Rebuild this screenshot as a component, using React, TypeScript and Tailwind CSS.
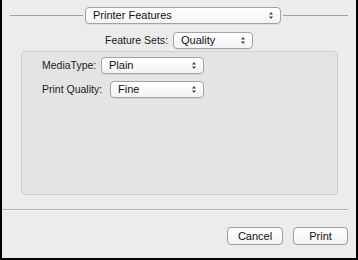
import React from 'react'

const font = { fontFamily: '"Liberation Sans", Arial, sans-serif' }

function Arrows() {
  return (
    <svg width="6" height="9" viewBox="0 0 6 9" className="shrink-0">
      <path d="M3 1 L5 3.5 L1 3.5 Z" fill="#444" />
      <path d="M3 8 L5 5.5 L1 5.5 Z" fill="#444" />
    </svg>
  )
}

function Popup({ label, className }: { label: string; className: string }) {
  return (
    <div
      className={`flex items-center justify-between h-[17px] pl-[7px] pr-[6px] rounded-[4px] border border-[#a3a3a3] bg-gradient-to-b from-white to-[#f4f4f4] shadow-[0_1px_0_rgba(0,0,0,0.06)] text-[11px] text-[#111] ${className}`}
    >
      <span className="leading-none">{label}</span>
      <Arrows />
    </div>
  )
}

function Button({ label, className }: { label: string; className: string }) {
  return (
    <div
      className={`flex items-center justify-center h-[18px] rounded-[4px] border border-[#9c9c9c] bg-gradient-to-b from-white to-[#f3f3f3] text-[11px] text-[#111] ${className}`}
    >
      {label}
    </div>
  )
}

export default function App() {
  return (
    <div
      style={font}
      className="w-[358px] h-[260px] bg-[#ececec] border-l-2 border-r-2 border-b-2 border-black flex flex-col"
    >
      {/* header popup with rules */}
      <div className="flex items-center mt-[7px] pl-[8px] pr-[8px]">
        <div className="w-[73px] h-px bg-[#a0a0a0]" />
        <Popup label="Printer Features" className="w-[196px] mx-[2px]" />
        <div className="flex-1 h-px bg-[#a0a0a0]" />
      </div>

      {/* feature sets */}
      <div className="flex items-center justify-center gap-[5px] mt-[8px] text-[10.5px] text-[#1a1a1a]">
        <span>Feature Sets:</span>
        <Popup label="Quality" className="w-[80px]" />
      </div>

      {/* settings panel */}
      <div className="ml-[19px] mr-[18px] mt-[2px] h-[144px] rounded-[4px] border border-[#cdcdcd] bg-[#e4e4e4] pt-[5px] pl-[20px] flex flex-col gap-[7px]">
        <div className="flex items-center w-[162px] justify-between">
          <span className="text-[10.5px] text-[#1a1a1a]">MediaType:</span>
          <Popup label="Plain" className="w-[103px]" />
        </div>
        <div className="flex items-center w-[162px] justify-between">
          <span className="text-[10.5px] text-[#1a1a1a]">Print Quality:</span>
          <Popup label="Fine" className="w-[94px]" />
        </div>
      </div>

      {/* separator */}
      <div className="mt-[14px] mr-[8px] h-[2px] border-t border-[#b4b4b4] border-b border-b-[#f6f6f6]" />

      {/* buttons */}
      <div className="flex justify-end gap-[10px] mt-[16px] pr-[8px]">
        <Button label="Cancel" className="w-[56px]" />
        <Button label="Print" className="w-[55px]" />
      </div>
    </div>
  )
}
